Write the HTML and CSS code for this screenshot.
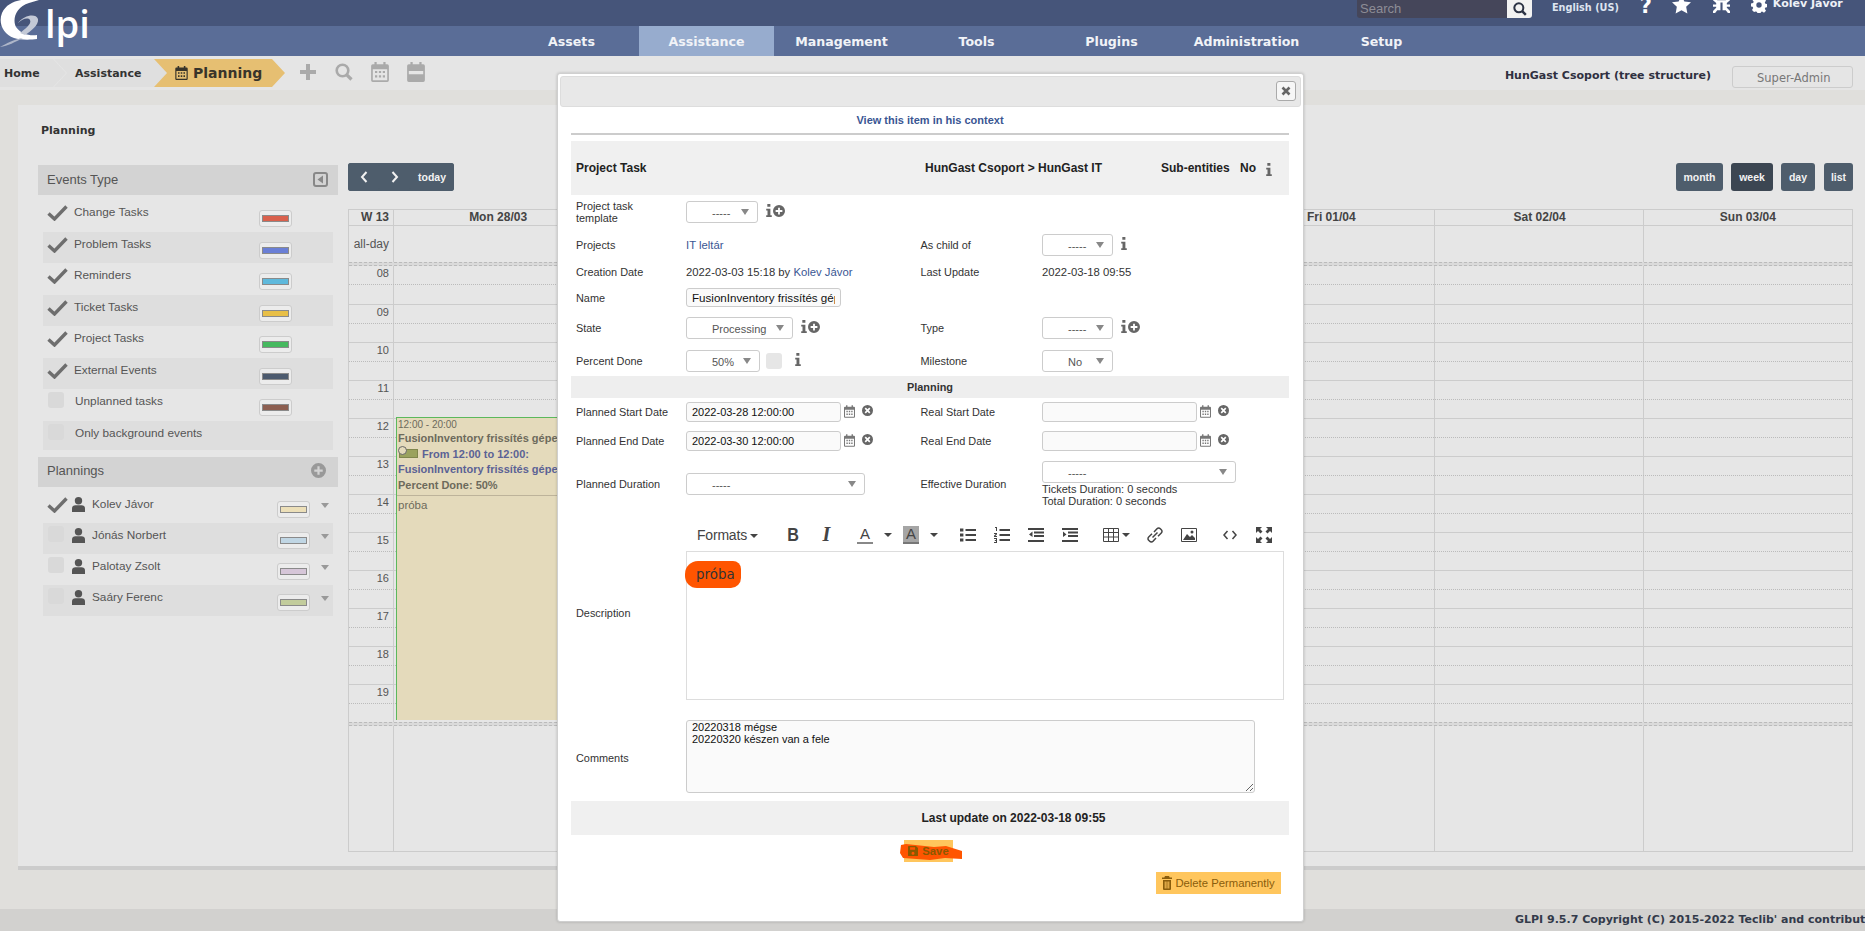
FILE: index.html
```html
<!DOCTYPE html>
<html lang="en">
<head>
  <meta charset="UTF-8">
  <title>Planning - GLPI</title>
  <link rel="stylesheet" href="styles.css">
</head>
<body>

<svg class="sprite" xmlns="http://www.w3.org/2000/svg">
  <symbol id="i-check" viewBox="0 0 21 16"><path d="M1.5 8.5L7.5 14L19.5 1.5" fill="none" stroke="currentColor" stroke-width="3.4"/></symbol>
  <symbol id="i-cal" viewBox="0 0 16 18"><path fill="currentColor" fill-rule="evenodd" d="M3 0h2v2h6V0h2v2h1.5A1.5 1.5 0 0 1 16 3.500V16.500A1.500 1.500 0 0 1 14.500 18H1.500A1.500 1.500 0 0 1 0 16.500V3.500A1.500 1.500 0 0 1 1.500 2H3zM1.500 6.500V16.500H14.500V6.500zM3.500 8h2v2h-2zM7 8h2v2H7zM10.500 8h2v2h-2zM3.500 12h2v2h-2zM7 12h2v2H7zM10.500 12h2v2h-2z"/></symbol>
  <symbol id="i-cal2" viewBox="0 0 16 18"><path fill="currentColor" fill-rule="evenodd" d="M3 0h2v2h6V0h2v2h1.500A1.500 1.500 0 0 1 16 3.500V16.500A1.500 1.500 0 0 1 14.500 18H1.500A1.500 1.500 0 0 1 0 16.500V3.500A1.500 1.500 0 0 1 1.500 2H3zM1.500 8V11H14.500V8z"/></symbol>
  <symbol id="i-x" viewBox="0 0 16 16"><path fill="currentColor" fill-rule="evenodd" d="M8 0a8 8 0 1 0 0 16A8 8 0 0 0 8 0zM5.500 3.800L8 6.300l2.500-2.500 1.700 1.700L9.700 8l2.500 2.500-1.700 1.700L8 9.700l-2.500 2.500-1.700-1.700L6.300 8 3.800 5.500z"/></symbol>
  <symbol id="i-plus" viewBox="0 0 16 16"><path fill="currentColor" fill-rule="evenodd" d="M8 0a8 8 0 1 0 0 16A8 8 0 0 0 8 0zM6.800 3.500h2.400v3.300h3.300v2.400H9.200v3.300H6.800V9.200H3.500V6.800h3.300z"/></symbol>
  <symbol id="i-info" viewBox="0 0 6 14"><path fill="currentColor" d="M1.200 0h3.300v3H1.200zM0 5h4.500v7H6v2H0v-2h1.400V7H0z"/></symbol>
  <symbol id="i-person" viewBox="0 0 13 15"><circle cx="6.500" cy="3.700" r="3.700" fill="currentColor"/><path fill="currentColor" d="M0 15V11.500C0 9.500 1.500 8.300 3.500 8.300h6c2 0 3.500 1.200 3.500 3.200V15z"/></symbol>
  <symbol id="i-search" viewBox="0 0 18 18"><circle cx="7.500" cy="7.500" r="5.800" fill="none" stroke="currentColor" stroke-width="2.600"/><path d="M11.800 11.800L16.500 16.500" stroke="currentColor" stroke-width="3.200"/></symbol>
  <symbol id="i-star" viewBox="0 0 20 19"><path fill="currentColor" d="M10 0l3 6.300 7 .9-5.100 4.800 1.300 6.900L10 15.600 3.800 18.900 5.100 12 0 7.200l7-.9z"/></symbol>
  <symbol id="i-bug" viewBox="0 0 16 16"><path fill="currentColor" d="M5 0h6v3H5zM0 2h2l2 2h8l2-2h2v2l-3 2.500V8h3v2h-3v1l3 3v2h-2l-2-2.500H9V6H7v7.500H4L2 16H0v-2l3-3v-1H0V8h3V6.500L0 4z"/></symbol>
  <symbol id="i-gear" viewBox="0 0 16 16"><path fill="currentColor" fill-rule="evenodd" d="M6.500 0h3l.4 2.200 1.300.6L13 1.500l2 2-1.200 1.900.6 1.300 2.100.4v3l-2.100.4-.6 1.300 1.200 1.900-2 2-1.900-1.200-1.200.5-.4 2.500h-3l-.4-2.400-1.300-.6L3 15l-2-2 1.200-1.900-.6-1.300L0 9.500v-3l2.100-.4.6-1.300L1.500 3l2-2 1.800 1.300 1.300-.6zM8 5.300a2.700 2.700 0 1 0 0 5.400 2.700 2.700 0 0 0 0-5.400z"/></symbol>
  <symbol id="i-save" viewBox="0 0 12 12"><path fill="currentColor" fill-rule="evenodd" d="M1 0h8.500L12 2.500V11a1 1 0 0 1-1 1H1a1 1 0 0 1-1-1V1a1 1 0 0 1 1-1zM2.500 1.500v3h6v-3zM6 7a1.800 1.800 0 1 0 0 3.600A1.800 1.800 0 0 0 6 7z"/></symbol>
  <symbol id="i-trash" viewBox="0 0 10 14"><path fill="currentColor" fill-rule="evenodd" d="M3 0h4l.7 1.500H10V3H0V1.500h2.300zM1 4h8v9a1 1 0 0 1-1 1H2a1 1 0 0 1-1-1zM2.700 5.500v7h1v-7zM4.500 5.500v7h1v-7zM6.300 5.500v7h1v-7z"/></symbol>
</svg>

<header class="topbar">
  <div class="search">
    <span class="search-input">Search</span>
    <span class="search-btn"><svg class="ico-search"><use href="#i-search"/></svg></span>
  </div>
  <span class="lang">English (US)</span>
  <span class="help">?</span>
  <svg class="ico-star"><use href="#i-star"/></svg>
  <svg class="ico-bug"><use href="#i-bug"/></svg>
  <svg class="ico-gear"><use href="#i-gear"/></svg>
  <span class="user">Kolev Jávor</span>
</header>

<a class="logo">
  <svg class="logo-mark" viewBox="0 0 46 50">
    <path fill="#fff" d="M39 0C24 -2 8 0 2 13C-2 23 3 34 14 38C20 40 30 40 37 39L37 35C29 36 21 34 16 27C12 19 16 7 29 3Z"/>
    <path fill="#c3c9d6" d="M18 23C24 15 36 13 38 19C39 25 31 31 25 35L20 33C25 29 32 24 30 20C28 17 22 19 18 23Z"/>
    <path fill="#aeb6c9" d="M0 47C6 44 14 39 23 38C15 42 8 46 0 47Z"/>
  </svg>
  <span class="logo-text">lpi</span>
</a>

<nav class="menu">
  <a>Assets</a>
  <a class="active">Assistance</a>
  <a>Management</a>
  <a>Tools</a>
  <a>Plugins</a>
  <a>Administration</a>
  <a>Setup</a>
</nav>

<div class="crumbbar">
  <a class="crumb crumb-home">Home</a>
  <a class="crumb crumb-mid">Assistance</a>
  <a class="crumb crumb-current"><svg class="ico-crumb"><use href="#i-cal"/></svg>Planning</a>
  <div class="crumb-tools">
    <svg viewBox="0 0 18 18"><path fill="currentColor" d="M7 1h4v6h6v4h-6v6H7v-6H1V7h6z"/></svg>
    <svg><use href="#i-search"/></svg>
    <svg><use href="#i-cal"/></svg>
    <svg><use href="#i-cal2"/></svg>
  </div>
  <div class="entity">
    <span class="entity-name">HunGast Csoport (tree structure)</span>
    <span class="profile">Super-Admin</span>
  </div>
</div>

<main class="card">
  <h2 class="card-title">Planning</h2>
  <div class="planning">

    <aside class="side">
      <div class="side-head">Events Type
        <svg class="side-toggle" viewBox="0 0 15 15"><rect x="1" y="1" width="13" height="13" rx="2" fill="none" stroke="currentColor" stroke-width="2"/><path fill="currentColor" d="M10 3.500v8L4.500 7.500z"/></svg>
      </div>
      <ul class="side-list">
        <li><svg class="check"><use href="#i-check"/></svg><span class="side-label">Change Tasks</span><span class="swatch"><i class="c-red"></i></span></li>
        <li><svg class="check"><use href="#i-check"/></svg><span class="side-label">Problem Tasks</span><span class="swatch"><i class="c-blue"></i></span></li>
        <li><svg class="check"><use href="#i-check"/></svg><span class="side-label">Reminders</span><span class="swatch"><i class="c-cyan"></i></span></li>
        <li><svg class="check"><use href="#i-check"/></svg><span class="side-label">Ticket Tasks</span><span class="swatch"><i class="c-yellow"></i></span></li>
        <li><svg class="check"><use href="#i-check"/></svg><span class="side-label">Project Tasks</span><span class="swatch"><i class="c-green"></i></span></li>
        <li><svg class="check"><use href="#i-check"/></svg><span class="side-label">External Events</span><span class="swatch"><i class="c-slate"></i></span></li>
        <li><span class="box"></span><span class="side-label">Unplanned tasks</span><span class="swatch"><i class="c-brown"></i></span></li>
        <li class="last"><span class="box"></span><span class="side-label">Only background events</span></li>
      </ul>
      <div class="side-head side-head-2">Plannings
        <svg class="side-add"><use href="#i-plus"/></svg>
      </div>
      <ul class="side-list people">
        <li><svg class="check"><use href="#i-check"/></svg><svg class="person"><use href="#i-person"/></svg><span class="side-label">Kolev Jávor</span><span class="swatch"><i class="p-1"></i></span><span class="caret"></span></li>
        <li><span class="box"></span><svg class="person"><use href="#i-person"/></svg><span class="side-label">Jónás Norbert</span><span class="swatch"><i class="p-2"></i></span><span class="caret"></span></li>
        <li><span class="box"></span><svg class="person"><use href="#i-person"/></svg><span class="side-label">Palotay Zsolt</span><span class="swatch"><i class="p-3"></i></span><span class="caret"></span></li>
        <li><span class="box"></span><svg class="person"><use href="#i-person"/></svg><span class="side-label">Saáry Ferenc</span><span class="swatch"><i class="p-4"></i></span><span class="caret"></span></li>
      </ul>
    </aside>

    <section class="cal">
      <div class="cal-bar">
        <div class="btn-group">
          <span class="cal-btn arrow"><svg viewBox="0 0 8 12"><path d="M6.500 1L2 6l4.500 5" fill="none" stroke="currentColor" stroke-width="2"/></svg></span>
          <span class="cal-btn arrow"><svg viewBox="0 0 8 12"><path d="M1.500 1L6 6l-4.500 5" fill="none" stroke="currentColor" stroke-width="2"/></svg></span>
          <span class="cal-btn today">today</span>
        </div>
        <div class="views">
          <span class="cal-btn v-month">month</span>
          <span class="cal-btn v-week">week</span>
          <span class="cal-btn v-day">day</span>
          <span class="cal-btn v-list">list</span>
        </div>
      </div>

      <div class="grid-cal">
        <div class="col-lines"><i></i><i></i><i></i><i></i><i></i><i></i><i></i><i></i></div>
        <div class="cal-head">
          <span class="axis">W 13</span>
          <span>Mon 28/03</span><span></span><span></span><span></span>
          <span>Fri 01/04</span><span>Sat 02/04</span><span>Sun 03/04</span>
        </div>
        <div class="allday"><span class="axis">all-day</span></div>
        <div class="divider"></div>
        <div class="hour"><span class="axis">08</span></div>
        <div class="hour"><span class="axis">09</span></div>
        <div class="hour"><span class="axis">10</span></div>
        <div class="hour"><span class="axis">11</span></div>
        <div class="hour"><span class="axis">12</span></div>
        <div class="hour"><span class="axis">13</span></div>
        <div class="hour"><span class="axis">14</span></div>
        <div class="hour"><span class="axis">15</span></div>
        <div class="hour"><span class="axis">16</span></div>
        <div class="hour"><span class="axis">17</span></div>
        <div class="hour"><span class="axis">18</span></div>
        <div class="hour"><span class="axis">19</span></div>
        <div class="divider"></div>

        <div class="event">
          <div class="ev-time">12:00 - 20:00</div>
          <div class="ev-line">FusionInventory frissítés gépeken</div>
          <div class="ev-line ev-link"><span class="ev-ico"><i></i></span>From 12:00 to 12:00:</div>
          <div class="ev-line ev-link">FusionInventory frissítés gépeken</div>
          <div class="ev-line">Percent Done: 50%</div>
          <div class="ev-sep"></div>
          <div class="ev-note">próba</div>
        </div>
      </div>
    </section>
  </div>
</main>

<footer class="foot">GLPI 9.5.7 Copyright (C) 2015-2022 Teclib' and contributors</footer>

<div class="modal">
  <div class="modal-title">
    <span class="modal-close"><svg viewBox="0 0 10 10"><path d="M1.500 1.500l7 7M8.500 1.500l-7 7" stroke="currentColor" stroke-width="2.600"/></svg></span>
  </div>
  <div class="modal-body">
    <a class="context-link">View this item in his context</a>
    <div class="rule"></div>

    <div class="form-head">
      <span class="first">Project Task</span>
      <span>HunGast Csoport &gt; HunGast IT</span>
      <span>Sub-entities</span>
      <span>No</span>
      <svg class="info"><use href="#i-info"/></svg>
    </div>

    <div class="form">
      <div class="lbl two">Project task<br>template</div>
      <div class="val"><span class="sel w-72">-----</span><svg class="info"><use href="#i-info"/></svg><svg class="plus"><use href="#i-plus"/></svg></div>
      <div></div><div></div>

      <div class="lbl">Projects</div>
      <div class="val"><a class="lnk">IT leltár</a></div>
      <div class="lbl-r">As child of</div>
      <div class="val"><span class="sel w-71">-----</span><svg class="info"><use href="#i-info"/></svg></div>

      <div class="lbl">Creation Date</div>
      <div class="val">2022-03-03 15:18 by&nbsp;<a class="lnk">Kolev Jávor</a></div>
      <div class="lbl-r">Last Update</div>
      <div class="val">2022-03-18 09:55</div>

      <div class="lbl">Name</div>
      <div class="val"><input class="inp inp-name" value="FusionInventory frissítés gépeken"></div>
      <div></div><div></div>

      <div class="lbl">State</div>
      <div class="val"><span class="sel w-107">Processing</span><svg class="info"><use href="#i-info"/></svg><svg class="plus"><use href="#i-plus"/></svg></div>
      <div class="lbl-r">Type</div>
      <div class="val"><span class="sel w-71">-----</span><svg class="info"><use href="#i-info"/></svg><svg class="plus"><use href="#i-plus"/></svg></div>

      <div class="lbl">Percent Done</div>
      <div class="val"><span class="sel w-74">50%</span><span class="mini-box"></span><svg class="info info-far"><use href="#i-info"/></svg></div>
      <div class="lbl-r">Milestone</div>
      <div class="val"><span class="sel w-71">No</span></div>

      <div class="band">Planning</div>

      <div class="lbl">Planned Start Date</div>
      <div class="val"><input class="inp" value="2022-03-28 12:00:00"><svg class="cal-ico"><use href="#i-cal"/></svg><svg class="clear-ico"><use href="#i-x"/></svg></div>
      <div class="lbl-r">Real Start Date</div>
      <div class="val"><input class="inp"><svg class="cal-ico"><use href="#i-cal"/></svg><svg class="clear-ico"><use href="#i-x"/></svg></div>

      <div class="lbl">Planned End Date</div>
      <div class="val"><input class="inp" value="2022-03-30 12:00:00"><svg class="cal-ico"><use href="#i-cal"/></svg><svg class="clear-ico"><use href="#i-x"/></svg></div>
      <div class="lbl-r">Real End Date</div>
      <div class="val"><input class="inp"><svg class="cal-ico"><use href="#i-cal"/></svg><svg class="clear-ico"><use href="#i-x"/></svg></div>

      <div class="lbl">Planned Duration</div>
      <div class="val"><span class="sel w-179">-----</span></div>
      <div class="lbl-r">Effective Duration</div>
      <div class="val val-col">
        <span class="sel w-194">-----</span>
        <span class="note">Tickets Duration: 0 seconds</span>
        <span class="note">Total Duration: 0 seconds</span>
      </div>

      <div class="lbl lbl-low">Description</div>
      <div class="val-wide">
        <div class="tb">
          <span class="tb-formats">Formats<i class="tb-caret"></i></span>
          <span class="tb-btn tb-b">B</span>
          <span class="tb-btn tb-i">I</span>
          <span class="tb-btn tb-a g-color"><u>A</u></span><i class="tb-caret split"></i>
          <span class="tb-btn tb-a"><b>A</b></span><i class="tb-caret split"></i>
          <span class="tb-btn g-list"><svg viewBox="0 0 16 16"><path fill="currentColor" d="M0 1.500h3.400v3H0zM0 6.500h3.400v3H0zM0 11.500h3.400v3H0zM5.500 2h10.500v2H5.500zM5.500 7h10.500v2H5.500zM5.500 12h10.500v2H5.500z"/></svg></span>
          <span class="tb-btn"><svg viewBox="0 0 16 16"><path fill="currentColor" d="M1 0h2v4H2V1H1zM0 6h3v1.200L1.300 9H3v1H0V8.800L1.700 7H0zM0 11h3v5H0v-1h2v-1H.8v-1H2v-1H0zM5.500 2h10.500v2H5.500zM5.500 7h10.500v2H5.500zM5.500 12h10.500v2H5.500z"/></svg></span>
          <span class="tb-btn"><svg viewBox="0 0 16 16"><path fill="currentColor" d="M0 1h16v2H0zM6 4.500h10v2H6zM6 8h10v2H6zM0 13h16v2H0zM4.500 4.500v5.500L1 7.500z"/></svg></span>
          <span class="tb-btn"><svg viewBox="0 0 16 16"><path fill="currentColor" d="M0 1h16v2H0zM6 4.500h10v2H6zM6 8h10v2H6zM0 13h16v2H0zM1 4.500v5.500l3.500-2.500z"/></svg></span>
          <span class="tb-btn tb-table g-table"><svg viewBox="0 0 16 16"><path fill="none" stroke="currentColor" d="M.5 1.500h15v13H.5zM.5 5.500h15M.5 10h15M5.500 1.500v13M10.500 1.500v13"/></svg></span><i class="tb-caret split-t"></i>
          <span class="tb-btn"><svg viewBox="0 0 16 16"><path fill="none" stroke="currentColor" stroke-width="1.500" d="M7 5l3-3.300a2.300 2.300 0 0 1 3.300 0l1 1a2.300 2.300 0 0 1 0 3.300L11 9.300M9 11l-3 3.300a2.300 2.300 0 0 1-3.300 0l-1-1a2.300 2.300 0 0 1 0-3.300L5 6.700M5.500 10.500l5-5"/></svg></span>
          <span class="tb-btn"><svg viewBox="0 0 16 16"><path fill="none" stroke="currentColor" d="M.5 1.500h15v13H.5z"/><path fill="currentColor" d="M2 13l4-6 3 3 2-2 3 3v2zM11 3.500a1.500 1.500 0 1 1 0 3 1.500 1.500 0 0 1 0-3z"/></svg></span>
          <span class="tb-btn g-code"><svg viewBox="0 0 16 16"><path fill="none" stroke="currentColor" stroke-width="1.500" d="M5.500 4L2 8l3.500 4M10.500 4L14 8l-3.500 4"/></svg></span>
          <span class="tb-btn"><svg viewBox="0 0 16 16"><path fill="currentColor" d="M0 0h6L4 2l2.500 2.500L4.500 6.500 2 4 0 6zM16 0v6l-2-2-2.500 2.500-2-2L12 2 10 0zM0 16v-6l2 2 2.500-2.500 2 2L4 14l2 2zM16 16h-6l2-2-2.500-2.500 2-2L14 12l2-2z"/></svg></span>
        </div>
        <div class="editor"><span class="marked">próba</span></div>
      </div>

      <div class="lbl lbl-low">Comments</div>
      <div class="val-wide val-center"><textarea class="comments">20220318 mégse
20220320 készen van a fele</textarea></div>

      <div class="band band-foot">Last update on 2022-03-18 09:55</div>
    </div>

    <div class="actions">
      <span class="btn btn-save">
        <svg class="scribble" viewBox="0 0 62 16"><path fill="#ff5500" d="M1 1L6 0 34 3 46 2 62 7 62 15 45 14 30 16 3 14 0 9z"/></svg>
        <span class="btn-in"><svg class="btn-ico-save"><use href="#i-save"/></svg>Save</span>
      </span>
    </div>
    <div class="actions-right">
      <span class="btn btn-del"><svg class="btn-ico-del"><use href="#i-trash"/></svg>Delete Permanently</span>
    </div>
  </div>
</div>

</body>
</html>
```

FILE: styles.css
```css
* {
  box-sizing: border-box;
}
html, body {
  margin: 0;
  height: 931px;
  overflow: hidden;
}
body {
  position: relative;
  background: #e0dfdc;
  font-family: "Liberation Sans", Arial, sans-serif;
  font-size: 11px;
  color: #333;
}
.sprite {
  display: none;
}
ul {
  list-style: none;
  margin: 0;
  padding: 0;
}

/* top bars */
.topbar {
  height: 26px;
  background: #46557a;
  display: flex;
  align-items: flex-start;
  padding-left: 1357px;
  color: #fff;
}
.search {
  display: flex;
  height: 18px;
  width: 175px;
}
.search-input {
  width: 150px;
  background: #45465a;
  color: #8d8d96;
  font-size: 13px;
  line-height: 18px;
  padding-left: 3px;
  border-radius: 0 0 0 3px;
}
.search-btn {
  width: 25px;
  background: #f2f2f2;
  color: #2c3345;
  border-radius: 0 0 3px 0;
  display: flex;
  align-items: center;
  justify-content: center;
}
.ico-search {
  width: 14px;
  height: 14px;
}
.lang {
  margin-left: 20px;
  font: bold 9.7px/15px "DejaVu Sans", sans-serif;
  color: #dde4f0;
  white-space: nowrap;
}
.help {
  margin-left: 21px;
  font: bold 21px/13px "DejaVu Sans", sans-serif;
  height: 14px;
  width: 12px;
}
.ico-star {
  margin: -5px 0 0 20px;
  width: 19px;
  height: 19px;
  flex: none;
}
.ico-bug {
  margin: -4px 0 0 22px;
  width: 17px;
  height: 17px;
  flex: none;
}
.ico-gear {
  margin: -3px 0 0 21px;
  width: 16px;
  height: 16px;
  flex: none;
}
.user {
  margin-left: 6px;
  font: bold 11px/8px "DejaVu Sans", sans-serif;
  color: #eef1f7;
  white-space: nowrap;
}
.logo {
  position: absolute;
  left: 0;
  top: 0;
  width: 92px;
  height: 52px;
}
.logo-mark {
  position: absolute;
  left: 0;
  top: 0;
  width: 46px;
  height: 50px;
}
.logo-text {
  position: absolute;
  left: 45px;
  top: -6px;
  font: 600 38px/58px "Open Sans", sans-serif;
  color: #fff;
}
.menu {
  height: 30px;
  background: #5a6d97;
  display: flex;
  padding-left: 504px;
}
.menu a {
  width: 135px;
  text-align: center;
  font: bold 12.6px/31px "DejaVu Sans", sans-serif;
  color: #f1f3f7;
}
.menu a.active {
  background: #97acce;
}

/* breadcrumb */
.crumbbar {
  height: 34px;
  background: #e5e5e5;
  padding-top: 3px;
  display: flex;
  align-items: flex-start;
}
.crumb {
  height: 28px;
  display: flex;
  align-items: center;
  font: bold 11px "DejaVu Sans", sans-serif;
  color: #333;
  background: #dfdfdf;
  clip-path: polygon(0 0, calc(100% - 13px) 0, 100% 50%, calc(100% - 13px) 100%, 0 100%, 13px 50%);
}
.crumb-home {
  width: 79px;
  margin-left: -13px;
  padding-left: 17px;
}
.crumb-mid {
  width: 114px;
  margin-left: -12px;
  padding-left: 21px;
}
.crumb-current {
  width: 131px;
  margin-left: -14px;
  padding-left: 21px;
  background: #e6bf72;
  font-size: 14px;
  color: #38342a;
}
.ico-crumb {
  width: 13px;
  height: 14px;
  margin-right: 5px;
}
.crumb-tools {
  display: flex;
  gap: 18px;
  margin: 3px 0 0 14px;
  color: #aaa;
}
.crumb-tools svg {
  width: 18px;
  height: 20px;
}
.entity {
  margin-left: auto;
  display: flex;
  align-items: center;
  margin-top: 7px;
}
.entity-name {
  font: bold 11px "DejaVu Sans", sans-serif;
  color: #2f3040;
  margin-top: -4px;
}
.profile {
  width: 121px;
  height: 22px;
  margin: 0 12px 0 21px;
  padding-left: 24px;
  border: 1px solid #ccc;
  border-radius: 3px;
  font: 11.500px/23px "DejaVu Sans", sans-serif;
  color: #777;
}

/* page card */
.card {
  height: 765px;
  margin: 15px 0 0 18px;
  padding: 19px 12px 0 20px;
  background: #e6e6e6;
  border-bottom: 4px solid #ccc;
}
.card-title {
  margin: 0 0 0 3px;
  font: bold 11px/14px "DejaVu Sans", sans-serif;
  color: #333;
}
.planning {
  display: flex;
  gap: 10px;
  margin-top: 25px;
}

/* side panel */
.side {
  width: 300px;
  flex: none;
  margin-top: 2px;
  color: #555;
}
.side-head {
  height: 30px;
  background: #d3d3d3;
  padding: 0 0 2px 9px;
  font-size: 13px;
  display: flex;
  align-items: center;
  justify-content: space-between;
}
.side-head-2 {
  margin-top: 7px;
}
.side-toggle {
  width: 15px;
  height: 15px;
  margin-right: 10px;
  color: #888;
}
.side-add {
  width: 15px;
  height: 15px;
  margin-right: 12px;
  color: #999;
}
.side-list {
  padding: 5px 5px 0;
}
.side-list li {
  height: 31.5px;
  display: flex;
  align-items: flex-start;
  font-size: 11.8px;
}
.side-list li:nth-child(even) {
  background: #dedede;
}
.side-list li.last {
  height: 29px;
}
.people li {
  height: 31px;
}
.check {
  width: 21px;
  height: 16px;
  margin: 5px 0 0 4px;
  flex: none;
  color: #6e6e6e;
}
.box {
  width: 16px;
  height: 16px;
  margin: 3px 5px 0 5px;
  flex: none;
  background: #d9d9d9;
  border-radius: 3px;
}
.side-label {
  margin: 5px 0 0 6px;
  line-height: 14px;
  white-space: nowrap;
}
.swatch {
  width: 33px;
  height: 17px;
  margin: 10px 41px 0 auto;
  flex: none;
  padding: 4px 2px;
  background: #ececec;
  border: 1px solid #ccc;
  border-radius: 3px;
}
.swatch i {
  display: block;
  height: 7px;
  border: 1px solid #8a8a8a;
}
.c-red { background: #d9604c; }
.c-blue { background: #6a7fd6; }
.c-cyan { background: #5fb9dc; }
.c-yellow { background: #e8bf47; }
.c-green { background: #46b95f; }
.c-slate { background: #4c5a6e; }
.c-brown { background: #8c5e50; }
.p-1 { background: #ecdfb8; }
.p-2 { background: #c0d6e4; }
.p-3 { background: #d6c6d8; }
.p-4 { background: #c2cc9c; }
.person {
  width: 13px;
  height: 15px;
  margin: 5px 0 0 4px;
  flex: none;
  color: #555;
}
.people .box + .person {
  margin-left: 3px;
}
.people .side-label {
  margin-left: 7px;
}
.people .swatch {
  margin: 9px 0 0 auto;
}
.caret {
  margin: 11px 4px 0 11px;
  flex: none;
  border-left: 4.500px solid transparent;
  border-right: 4.500px solid transparent;
  border-top: 5px solid #999;
}

/* calendar */
.cal {
  flex: 1;
  min-width: 0;
}
.cal-bar {
  height: 28px;
  display: flex;
  justify-content: space-between;
  margin-bottom: 18px;
}
.btn-group {
  display: flex;
  background: #4e5d6c;
  border-radius: 3px;
  width: 106px;
}
.views {
  display: flex;
}
.cal-btn {
  height: 28px;
  background: #4e5d6c;
  color: #f2f2f2;
  font-weight: bold;
  font-size: 10.5px;
  line-height: 28px;
  text-align: center;
  border-radius: 3px;
}
.arrow {
  width: 31px;
  display: flex;
  align-items: center;
  justify-content: center;
}
.arrow svg {
  width: 8px;
  height: 12px;
}
.today {
  flex: 1;
}
.v-month { width: 47px; }
.v-week { width: 42px; margin-left: 8px; background: #3c4652; }
.v-day { width: 34px; margin-left: 8px; }
.v-list { width: 29px; margin-left: 9px; }

.grid-cal {
  position: relative;
  width: 1505px;
  height: 643px;
  border: 1px solid #ccc;
}
.col-lines {
  position: absolute;
  inset: 0;
  display: grid;
  grid-template-columns: 45px repeat(7, 1fr);
}
.col-lines i {
  border-right: 1px solid #ccc;
}
.col-lines i:last-child {
  border-right: 0;
}
.cal-head {
  position: relative;
  height: 16px;
  display: grid;
  grid-template-columns: 45px repeat(7, 1fr);
  border-bottom: 1px solid #ccc;
  font-weight: bold;
  font-size: 12px;
  line-height: 15px;
  text-align: center;
  color: #444;
}
.cal-head .axis {
  font-weight: bold;
  color: #444;
}
.axis {
  display: block;
  width: 40px;
  text-align: right;
  font-size: 12px;
  color: #555;
}
.allday {
  position: relative;
  height: 36px;
  line-height: 36px;
}
.divider {
  position: relative;
  height: 4px;
  background: #dadada;
  border-top: 1px dashed #bbb;
  border-bottom: 1px dashed #bbb;
}
.hour {
  position: relative;
  height: 38px;
  line-height: 15px;
  border-top: 1px solid #ccc;
}
.hour .axis {
  font-size: 11px;
}
.divider + .hour {
  border-top: 0;
}
.hour::after {
  content: "";
  position: absolute;
  left: 0;
  right: 0;
  top: 18px;
  border-top: 1px dotted #bbb;
}
.event {
  position: absolute;
  left: 47px;
  top: 207px;
  width: 161px;
  height: 303px;
  padding-left: 1px;
  background: #e4dabb;
  border-left: 1px solid #5cb85c;
  border-top: 1px solid #5cb85c;
  color: #6d6a5c;
  overflow: hidden;
  white-space: nowrap;
}
.ev-time {
  font-size: 10px;
  line-height: 13px;
}
.ev-line {
  font-weight: bold;
  font-size: 11px;
  line-height: 15.7px;
}
.ev-link {
  color: #5b6295;
}
.ev-ico {
  display: inline-block;
  position: relative;
  width: 19px;
  height: 9px;
  margin: 0 4px 0 1px;
  background: #9aa25e;
  border: 1px solid #7f864c;
}
.ev-ico i {
  position: absolute;
  left: -2px;
  top: -4px;
  width: 9px;
  height: 9px;
  border-radius: 50%;
  background: #e4dabb;
  border: 1px solid #666;
}
.ev-sep {
  height: 1px;
  background: #bdb39a;
  margin: 1px 0 3px -1px;
}
.ev-note {
  font-size: 11.5px;
}

.foot {
  margin-top: 39px;
  height: 22px;
  background: #d2d1cf;
  padding-left: 1515px;
  font: bold 11px/22px "DejaVu Sans", sans-serif;
  color: #333a4a;
  white-space: nowrap;
  overflow: hidden;
}

/* modal */
.modal {
  position: absolute;
  left: 557px;
  top: 73px;
  width: 747px;
  height: 849px;
  background: #fff;
  border: 1px solid #cfcfcf;
  border-radius: 3px;
  box-shadow: 0 0 3px rgba(0, 0, 0, .2);
  padding: 2px;
  font-size: 10.9px;
  color: #333;
}
.modal-title {
  height: 31px;
  width: 741px;
  background: #e8e8e8;
  border: 1px solid #ddd;
  border-radius: 3px;
  position: relative;
}
.modal-close {
  position: absolute;
  right: 4px;
  top: 4px;
  width: 20px;
  height: 20px;
  background: #f6f6f6;
  border: 1px solid #aaa;
  border-radius: 3px;
  color: #666;
  display: flex;
  align-items: center;
  justify-content: center;
}
.modal-close svg {
  width: 10px;
  height: 10px;
}
.modal-body {
  padding: 0 12px 0 11px;
}
.context-link {
  display: block;
  height: 26px;
  line-height: 26px;
  text-align: center;
  font-weight: bold;
  font-size: 11px;
  color: #3a5693;
}
.rule {
  height: 2px;
  background: #ccc;
  margin-bottom: 6px;
}
.form-head {
  height: 54px;
  background: #f0f0f0;
  display: grid;
  grid-template-columns: 354px 236px 79px 29px auto;
  align-items: center;
  font-weight: bold;
  font-size: 12px;
  color: #222;
}
.form-head .first {
  padding-left: 5px;
}
.form-head .info {
  margin: 2px 0 0 -3px;
}
.form {
  display: grid;
  grid-template-columns: 115px 234.5px 121.500px 1fr;
  grid-template-rows: 34px 31px 24px 27px 34px 31px 22px 28px 30px 56px 200px 89px 34px;
  align-items: center;
}
.lbl {
  padding-left: 5px;
}
.lbl.two {
  line-height: 12px;
}
.lbl-low {
  padding-top: 2px;
}
.val {
  display: flex;
  align-items: center;
  white-space: nowrap;
  font-size: 11.3px;
}
.val-col {
  flex-direction: column;
  align-items: flex-start;
}
.val-wide {
  grid-column: 2 / -1;
  align-self: start;
}
.val-center {
  align-self: center;
}
.note {
  line-height: 12px;
  font-size: 11px;
}
.lnk {
  color: #3a5693;
}
.sel {
  position: relative;
  display: block;
  height: 22px;
  padding-left: 25px;
  border: 1px solid #ccc;
  border-radius: 3px;
  background: #fff;
  font-size: 11px;
  line-height: 23px;
  color: #555;
  flex: none;
}
.sel::after {
  content: "";
  position: absolute;
  right: 8px;
  top: 7px;
  border-left: 4px solid transparent;
  border-right: 4px solid transparent;
  border-top: 6px solid #888;
}
.w-71 { width: 71px; }
.w-72 { width: 72px; }
.w-74 { width: 74px; }
.w-107 { width: 107px; }
.w-179 { width: 179px; }
.w-194 { width: 194px; }
.info {
  width: 6px;
  height: 13px;
  margin: -3px 0 0 8px;
  flex: none;
  color: #666;
}
.info-far {
  margin-left: 13px;
}
.plus {
  width: 12px;
  height: 12px;
  margin: -3px 0 0 1px;
  flex: none;
  color: #666;
}
.mini-box {
  width: 16px;
  height: 16px;
  margin-left: 6px;
  background: #e6e6e6;
  border-radius: 3px;
  flex: none;
}
.inp {
  width: 155px;
  height: 19.500px;
  padding: 0 5px;
  border: 1px solid #ccc;
  border-radius: 3px;
  background: #fafafa;
  font: 11px "Liberation Sans", Arial, sans-serif;
  color: #111;
  flex: none;
}
.inp-name {
  font-size: 11.6px;
}
.cal-ico {
  width: 11px;
  height: 13px;
  margin: -2px 0 0 3px;
  color: #777;
  flex: none;
}
.clear-ico {
  width: 11px;
  height: 11px;
  margin: -3px 0 0 7px;
  color: #666;
  flex: none;
}
.band {
  grid-column: 1 / -1;
  align-self: stretch;
  background: #eee;
  text-align: center;
  line-height: 22px;
  font-weight: bold;
  color: #333;
}
.band-foot {
  background: #f0f0f0;
  line-height: 34px;
  font-size: 12px;
  color: #222;
  padding-left: 167px;
}

/* editor toolbar */
.tb {
  height: 33px;
  margin-top: 6px;
  display: flex;
  align-items: center;
  color: #444;
}
.tb-formats {
  width: 89.500px;
  padding-left: 11px;
  font-size: 14px;
  letter-spacing: -.2px;
  white-space: nowrap;
}
.tb-btn {
  width: 34px;
  height: 20px;
  flex: none;
  display: flex;
  align-items: center;
  justify-content: center;
}
.tb-btn svg {
  width: 16px;
  height: 16px;
}
.tb-b {
  font-weight: bold;
  font-size: 19px;
  transform: scaleX(.85);
}
.tb-i {
  font: italic bold 20px "Liberation Serif", serif;
}
.tb-a {
  font-size: 15px;
  font-weight: normal;
}
.tb-a u {
  display: block;
  width: 16px;
  text-align: center;
  text-decoration: none;
  border-bottom: 2px solid #888;
  line-height: 16px;
}
.tb-a b {
  display: block;
  width: 16px;
  text-align: center;
  font-weight: normal;
  background: #a5a5a5;
  border-bottom: 2px solid #777;
  line-height: 16px;
}
.tb-caret {
  display: inline-block;
  width: 0;
  border-left: 4px solid transparent;
  border-right: 4px solid transparent;
  border-top: 4px solid #444;
  vertical-align: middle;
  margin-left: 3px;
}
.split {
  margin: 0 2px;
}
.split-t {
  margin: 0 -2px 0 -6px;
}
.g-color { margin-left: 4.500px; }
.g-list { margin-left: 11px; }
.g-table { margin-left: 7px; }
.tb-table + .split-t + .tb-btn { margin-left: 10px; }
.g-code { margin-left: 7px; }
.editor {
  width: 598px;
  height: 149px;
  border: 1px solid #ddd;
}
.marked {
  display: block;
  width: 56px;
  height: 27px;
  margin: 9px 0 0 -2px;
  padding-left: 11px;
  background: #ff5500;
  border-radius: 13px 8px 10px 12px;
  font: 13.400px/27px "DejaVu Sans", sans-serif;
  color: #333;
}
.comments {
  display: block;
  width: 568.500px;
  height: 73px;
  padding: 0 5px;
  margin: 0;
  border: 1px solid #ccc;
  border-radius: 3px;
  background: #fafafa;
  font: 11px/12px "Liberation Sans", Arial, sans-serif;
  color: #111;
}

/* buttons */
.actions {
  margin-top: 5px;
  height: 22px;
  padding-left: 333px;
}
.actions-right {
  margin-top: 10px;
  display: flex;
  justify-content: flex-end;
  padding-right: 8px;
}
.btn {
  position: relative;
  display: inline-flex;
  align-items: center;
  justify-content: center;
  height: 22px;
  background: #ffc65d;
  font-size: 11.300px;
  color: #8a5d0c;
  white-space: nowrap;
}
.btn-save {
  width: 49px;
}
.btn-del {
  width: 125px;
}
.scribble {
  position: absolute;
  left: -4px;
  top: 4px;
  width: 62px;
  height: 16px;
}
.btn-in {
  position: relative;
  display: flex;
  align-items: center;
  color: #8a5a00;
  font-weight: bold;
}
.btn-ico-save {
  width: 10px;
  height: 10px;
  margin-right: 4px;
}
.btn-ico-del {
  width: 10px;
  height: 14px;
  margin-right: 3px;
}
```
